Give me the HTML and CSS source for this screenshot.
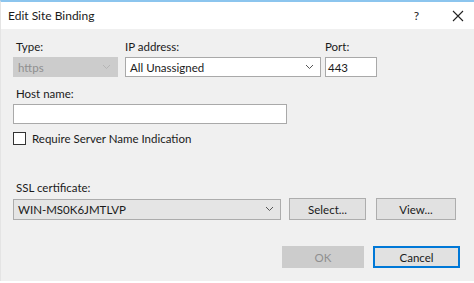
FILE: index.html
```html
<!DOCTYPE html>
<html lang="en">
<head>
  <meta charset="UTF-8" />
  <title>Edit Site Binding</title>
  <link rel="stylesheet" href="styles.css">
</head>
<body>
  <div class="window">
    <div class="title-bar">
      <span class="title">Edit Site Binding</span>
      <span class="help">?</span>
      <svg class="close" width="12" height="12" viewBox="0 0 12 12"><path d="M1 1 L11 11 M11 1 L1 11" stroke="#222" stroke-width="1.1" fill="none"/></svg>
    </div>

    <div class="body">
      <div class="row row-top">
        <div class="field f-type">
          <label>Type:</label>
          <div class="select disabled">
            <span>https</span>
            <svg class="chev" width="9" height="6" viewBox="0 0 9 6"><path d="M1 1 L4.5 4.5 L8 1" stroke="#b5b5b5" fill="none"/></svg>
          </div>
        </div>
        <div class="field f-ip">
          <label>IP address:</label>
          <div class="select">
            <span>All Unassigned</span>
            <svg class="chev" width="9" height="6" viewBox="0 0 9 6"><path d="M1 1 L4.5 4.5 L8 1" stroke="#555" fill="none"/></svg>
          </div>
        </div>
        <div class="field f-port">
          <label>Port:</label>
          <div class="input">443</div>
        </div>
      </div>

      <div class="field f-host">
        <label>Host name:</label>
        <div class="input host"></div>
      </div>

      <div class="check-row">
        <span class="checkbox"></span>
        <span>Require Server Name Indication</span>
      </div>

      <div class="field f-ssl">
        <label>SSL certificate:</label>
        <div class="ssl-row">
          <div class="select ssl">
            <span>WIN-MS0K6JMTLVP</span>
            <svg class="chev" width="9" height="6" viewBox="0 0 9 6"><path d="M1 1 L4.5 4.5 L8 1" stroke="#555" fill="none"/></svg>
          </div>
          <button class="btn btn-select">Select...</button>
          <button class="btn btn-view">View...</button>
        </div>
      </div>

      <div class="footer">
        <button class="btn btn-ok" disabled>OK</button>
        <button class="btn btn-cancel">Cancel</button>
      </div>
    </div>
  </div>
</body>
</html>
```

FILE: styles.css
```css
* {
  box-sizing: border-box;
}

body {
  margin: 0;
  font-family: Lato, "Noto Sans", sans-serif;
  font-size: 11.5px;
  color: #1a1a1a;
  background: #ffffff;
}

.window {
  width: 474px;
  height: 281px;
  border-top: 2px solid #8cc5ee;
  border-left: 1px solid #e4e4e4;
  background: #f0f0f0;
}

.title-bar {
  height: 27px;
  background: #ffffff;
  display: flex;
  align-items: center;
  padding: 0 10px 0 7px;
}

.title {
  flex: 1;
  font-size: 12px;
}

.help {
  font-size: 12px;
  margin-right: 33px;
}

.close {
  flex-shrink: 0;
}

.body {
  padding: 11px 0 0 12px;
}

.field label {
  display: block;
  height: 17px;
  padding-left: 3px;
}

.row {
  display: flex;
}

.select,
.input {
  height: 20px;
  border: 1px solid #a9a9a9;
  background: #ffffff;
  display: flex;
  align-items: center;
  padding: 0 4px;
}

.select span {
  flex: 1;
}

.chev {
  margin-right: 2px;
}

.f-type {
  width: 105px;
}

.select.disabled {
  background: #cccccc;
  border-color: #cccccc;
  color: #8f8f8f;
}

.f-ip {
  width: 196px;
  margin-left: 7px;
}

.f-ip label {
  padding-left: 0;
}

.f-port {
  width: 52px;
  margin-left: 4px;
}

.f-port label {
  padding-left: 0;
}

.input {
  padding: 0 2px;
}

.f-host {
  margin-top: 10px;
}

.input.host {
  width: 274px;
}

.check-row {
  display: flex;
  align-items: center;
  margin-top: 7px;
  height: 14px;
}

.checkbox {
  width: 13px;
  height: 13px;
  border: 1px solid #333;
  background: #fff;
  margin-right: 6px;
}

.f-ssl {
  margin-top: 36px;
}

.ssl-row {
  display: flex;
  align-items: center;
}

.select.ssl {
  width: 268px;
  height: 21px;
  background: #e5e5e5;
  border-color: #acacac;
}

.btn {
  font-family: inherit;
  font-size: 11.5px;
  color: #1a1a1a;
  height: 22px;
  border: 1px solid #adadad;
  background: #e1e1e1;
  padding: 0;
}

.btn-select {
  width: 77px;
  margin-left: 8px;
}

.btn-view {
  width: 80px;
  margin-left: 10px;
}

.footer {
  display: flex;
  justify-content: flex-end;
  margin-top: 26px;
  padding-right: 14px;
}

.btn-ok {
  width: 82px;
  background: #cccccc;
  border-color: #cccccc;
  color: #8f8f8f;
}

.btn-cancel {
  width: 87px;
  margin-left: 9px;
  border: 2px solid #0078d7;
}
```
